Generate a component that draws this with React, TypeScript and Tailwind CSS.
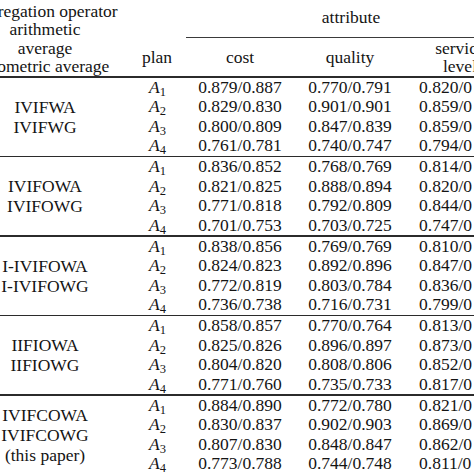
import React from "react";

type Group = { labels: string[]; rows: [string, string, string][] };

const groups: Group[] = [
  {
    labels: ["IVIFWA", "IVIFWG"],
    rows: [
      ["0.879/0.887", "0.770/0.791", "0.820/0"],
      ["0.829/0.830", "0.901/0.901", "0.859/0"],
      ["0.800/0.809", "0.847/0.839", "0.859/0"],
      ["0.761/0.781", "0.740/0.747", "0.794/0"],
    ],
  },
  {
    labels: ["IVIFOWA", "IVIFOWG"],
    rows: [
      ["0.836/0.852", "0.768/0.769", "0.814/0"],
      ["0.821/0.825", "0.888/0.894", "0.820/0"],
      ["0.771/0.818", "0.792/0.809", "0.844/0"],
      ["0.701/0.753", "0.703/0.725", "0.747/0"],
    ],
  },
  {
    labels: ["I-IVIFOWA", "I-IVIFOWG"],
    rows: [
      ["0.838/0.856", "0.769/0.769", "0.810/0"],
      ["0.824/0.823", "0.892/0.896", "0.847/0"],
      ["0.772/0.819", "0.803/0.784", "0.836/0"],
      ["0.736/0.738", "0.716/0.731", "0.799/0"],
    ],
  },
  {
    labels: ["IIFIOWA", "IIFIOWG"],
    rows: [
      ["0.858/0.857", "0.770/0.764", "0.813/0"],
      ["0.825/0.826", "0.896/0.897", "0.873/0"],
      ["0.804/0.820", "0.808/0.806", "0.852/0"],
      ["0.771/0.760", "0.735/0.733", "0.817/0"],
    ],
  },
  {
    labels: ["IVIFCOWA", "IVIFCOWG", "(this paper)"],
    rows: [
      ["0.884/0.890", "0.772/0.780", "0.821/0"],
      ["0.830/0.837", "0.902/0.903", "0.869/0"],
      ["0.807/0.830", "0.848/0.847", "0.862/0"],
      ["0.773/0.788", "0.744/0.748", "0.811/0"],
    ],
  },
];

function Rule() {
  return <div className="h-[1.5px] bg-[#2b2b2b]" />;
}

export default function App() {
  return (
    <div className="w-[474px] h-[474px] overflow-hidden bg-white text-[#141414] font-['Liberation_Serif',serif] text-[17.5px]">
      <div className="-ml-[39px] w-[556px]">
        {/* header */}
        <div className="flex h-[76px]">
          <div className="w-[168px] flex flex-col justify-center items-center leading-[18.5px] whitespace-nowrap pt-[1px]">
            <div>aggregation operator</div>
            <div>arithmetic</div>
            <div>average</div>
            <div>geometric average</div>
          </div>
          <div className="flex-1 flex flex-col">
            <div className="h-[38px] flex">
              <div className="w-[56px]" />
              <div className="flex-1 flex flex-col">
                <div className="flex-1 flex items-center justify-center pb-[2px]">attribute</div>
                <div className="h-[1px] bg-[#3a3a3a] ml-[1px]" />
              </div>
            </div>
            <div className="flex-1 grid grid-cols-[56px_110px_110px_112px] items-center">
              <div className="text-center">plan</div>
              <div className="text-center">cost</div>
              <div className="text-center">quality</div>
              <div className="flex flex-col items-center leading-[18px] pr-[2px]">
                <div>service</div>
                <div>level</div>
              </div>
            </div>
          </div>
        </div>
        <Rule />
        {groups.map((g, gi) => (
          <div key={gi}>
            <div className="flex">
              <div className="w-[168px] flex flex-col justify-center items-center leading-[20px] whitespace-nowrap">
                {g.labels.map((l) => (
                  <div key={l}>{l}</div>
                ))}
              </div>
              <div className="flex-1 flex flex-col">
                {g.rows.map((r, ri) => (
                  <div
                    key={ri}
                    className="h-[19.5px] grid grid-cols-[56px_110px_110px_112px] items-center leading-[19.5px] whitespace-nowrap"
                  >
                    <div className="text-center pl-[1px]">
                      <span className="italic">A</span>
                      <sub className="text-[12.5px]">{ri + 1}</sub>
                    </div>
                    <div className="text-center">{r[0]}</div>
                    <div className="text-center">{r[1]}</div>
                    <div className="pl-[14px]">{r[2]}</div>
                  </div>
                ))}
              </div>
            </div>
            {gi < groups.length - 1 && <Rule />}
          </div>
        ))}
      </div>
    </div>
  );
}
